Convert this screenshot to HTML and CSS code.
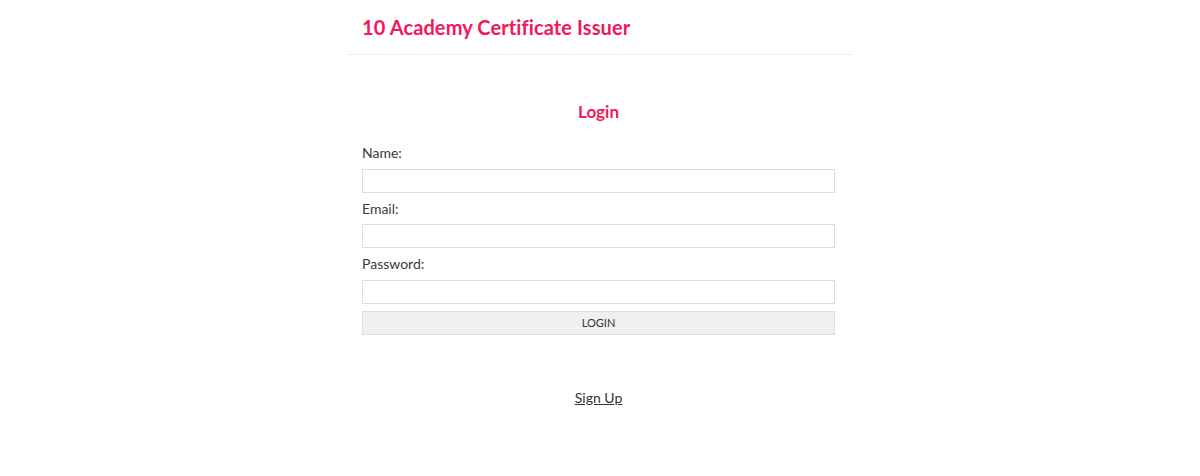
FILE: index.html
```html
<!DOCTYPE html>
<html>
<head>
<meta charset="utf-8">
<link rel="stylesheet" href="styles.css">
</head>
<body>
<div class="container">
  <header class="header">
    <h1 class="brand">10 Academy Certificate Issuer</h1>
  </header>
  <main class="main">
    <h2 class="title">Login</h2>
    <form class="form">
      <label class="label">Name:</label>
      <input class="input" type="text">
      <label class="label">Email:</label>
      <input class="input" type="email">
      <label class="label">Password:</label>
      <input class="input" type="password">
      <button class="btn" type="button">LOGIN</button>
    </form>
    <div class="signup"><a href="#" class="link">Sign Up</a></div>
  </main>
</div>
</body>
</html>
```

FILE: styles.css
```css
* { box-sizing: border-box; }
body {
  margin: 0;
  background: #fff;
  font-family: "Lato", "Open Sans", sans-serif;
  color: #333;
}
.container {
  width: 506px;
  margin: 0 auto;
}
.header {
  height: 55px;
  border-bottom: 1px solid #eee;
  padding: 14px 15px 0;
}
.brand {
  margin: 0;
  font-size: 20px;
  font-weight: 700;
  color: #f2175a;
  line-height: 26px;
  letter-spacing: 0.1px;
}
.main {
  padding: 0 18px 0 15px;
}
.title {
  margin: 46px 0 0;
  text-align: center;
  font-size: 17px;
  font-weight: 700;
  color: #f2175a;
  line-height: 22px;
}
.form {
  display: flex;
  flex-direction: column;
  margin-top: 21px;
}
.label {
  font-size: 14px;
  line-height: 18.5px;
  color: #3a3a3a;
  margin-bottom: 6px;
}
.input {
  height: 24px;
  border: 1px solid #ddd;
  background: #fff;
  margin: 0 0 7px;
  font: inherit;
}
.btn {
  height: 24px;
  margin-top: 0;
  border: 1px solid #ddd;
  background: #efefef;
  font-family: inherit;
  font-size: 11px;
  color: #333;
}
.signup {
  text-align: center;
  margin-top: 52px;
}
.link {
  color: #333;
  font-size: 14px;
  text-decoration: underline;
}
```
